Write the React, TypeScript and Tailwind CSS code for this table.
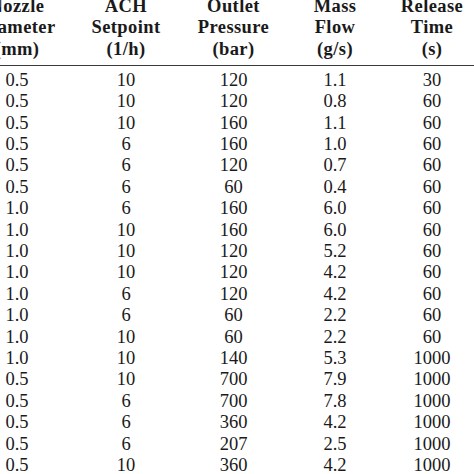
const rows: [string, string, string, string, string][] = [
    ["0.5", "10", "120", "1.1", "30"],
    ["0.5", "10", "120", "0.8", "60"],
    ["0.5", "10", "160", "1.1", "60"],
    ["0.5", "6", "160", "1.0", "60"],
    ["0.5", "6", "120", "0.7", "60"],
    ["0.5", "6", "60", "0.4", "60"],
    ["1.0", "6", "160", "6.0", "60"],
    ["1.0", "10", "160", "6.0", "60"],
    ["1.0", "10", "120", "5.2", "60"],
    ["1.0", "10", "120", "4.2", "60"],
    ["1.0", "6", "120", "4.2", "60"],
    ["1.0", "6", "60", "2.2", "60"],
    ["1.0", "10", "60", "2.2", "60"],
    ["1.0", "10", "140", "5.3", "1000"],
    ["0.5", "10", "700", "7.9", "1000"],
    ["0.5", "6", "700", "7.8", "1000"],
    ["0.5", "6", "360", "4.2", "1000"],
    ["0.5", "6", "207", "2.5", "1000"],
    ["0.5", "10", "360", "4.2", "1000"]
]

const headers = [
    ["Nozzle", "Diameter", "(mm)"],
    ["ACH", "Setpoint", "(1/h)"],
    ["Outlet", "Pressure", "(bar)"],
    ["Mass", "Flow", "(g/s)"],
    ["Release", "Time", "(s)"]
]

const cols = "grid grid-cols-[108px_110px_105px_98px_96px]"

export default function App() {
    return (
        <div
            className="w-[474px] h-[474px] overflow-hidden bg-white text-[#1a1a1a] text-[18.5px] leading-[21.4px]"
            style={{ fontFamily: '"Liberation Serif", "Times New Roman", serif' }}
        >
            <div className="w-[517px] -ml-[37px] -mt-[4px]">
                {/* Header */}
                <div className={`${cols} font-bold tracking-[0.4px] pb-[5px]`}>
                    {headers.map((h, i) => (
                        <div key={i} className="flex flex-col items-center">
                            {h.map((line) => (
                                <span key={line}>{line}</span>
                            ))}
                        </div>
                    ))}
                </div>

                <div className="h-px bg-[#3a3a3a]" />

                {/* Body */}
                <div className="pt-[3.5px]">
                    {rows.map((r, i) => (
                        <div key={i} className={cols}>
                            {r.map((c, j) => (
                                <div key={j} className="text-center">{c}</div>
                            ))}
                        </div>
                    ))}
                </div>
            </div>
        </div>
    )
}
